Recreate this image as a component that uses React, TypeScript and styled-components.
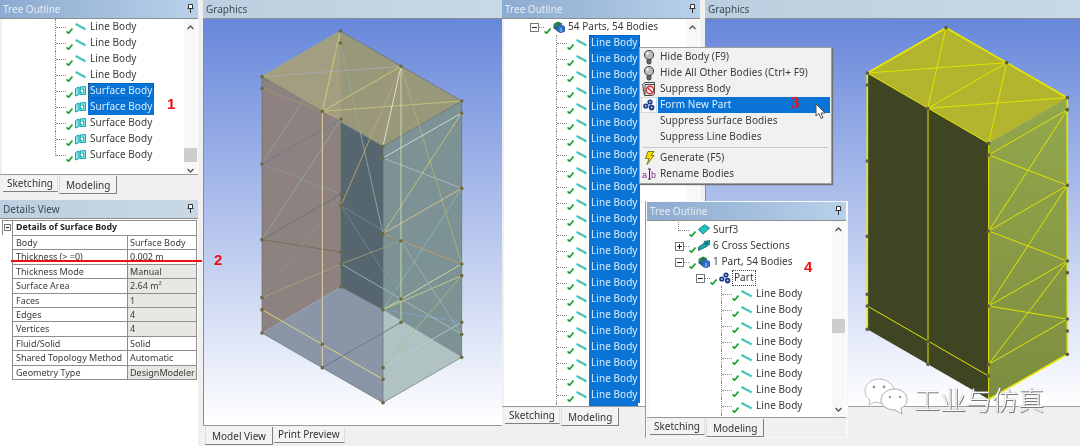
import { createGlobalStyle } from 'styled-components'
import styled from 'styled-components'

const GlobalStyle = createGlobalStyle`
  html, body {
    margin: 0;
    padding: 0;
    background: #f0f0f0;
  }
  * {
    box-sizing: border-box;
  }
`

const Page = styled.div`
  position: relative;
  width: 1080px;
  height: 446px;
  display: flex;
  overflow: hidden;
  background: #f0f0f0;
  font-family: "Noto Sans", "Liberation Sans", sans-serif;
  font-size: 10px;
  color: #3a3a3a;
  filter: blur(0.35px);
`

const Column = styled.div<{ $width: number; $gap?: number }>`
  width: ${({ $width }) => $width}px;
  margin-right: ${({ $gap }) => $gap ?? 0}px;
  flex: none;
  display: flex;
  flex-direction: column;
`

const TitleBar = styled.div<{ $dim?: boolean; $offset?: number }>`
  height: 19px;
  flex: none;
  display: flex;
  align-items: center;
  justify-content: space-between;
  margin-top: ${({ $offset }) => $offset ?? 0}px;
  padding: 0 4px 1px 3px;
  border-bottom: 1px solid #8d8d8d;
  font-size: 10px;
  color: ${({ $dim }) => ($dim ? '#e4ebf2' : '#3f4a52')};
  background: ${({ $dim }) =>
    $dim ? 'linear-gradient(90deg, #8dabd0, #b8d1ea)' : 'linear-gradient(90deg, #bccfe0, #c8d8e5)'};
`

const TreeArea = styled.div<{ $height: number }>`
  height: ${({ $height }) => $height}px;
  flex: none;
  display: flex;
  margin-left: 2px;
  background: #fff;
  overflow: hidden;
`

const TreeBody = styled.div<{ $pad?: number }>`
  flex: 1;
  min-width: 0;
  padding-top: ${({ $pad }) => $pad ?? 0}px;
  overflow: hidden;
`

const Row = styled.div<{ $indent: number }>`
  height: 16px;
  display: flex;
  align-items: flex-start;
  padding-left: ${({ $indent }) => $indent}px;
  white-space: nowrap;
`

const Connector = styled.span<{ $width: number; $spine?: boolean; $last?: boolean }>`
  position: relative;
  width: ${({ $width }) => $width}px;
  height: ${({ $last }) => ($last ? 9 : 16)}px;
  flex: none;
  border-left: ${({ $spine }) => ($spine ? '1px dotted #8a8a8a' : 'none')};
  &::after {
    content: '';
    position: absolute;
    left: 0;
    right: 0;
    top: 8px;
    border-top: 1px dotted #8a8a8a;
  }
`

const SpineStub = styled.span`
  height: 16px;
  flex: none;
  border-left: 1px dotted #8a8a8a;
`

const SelectionStub = styled.span`
  width: 49px;
  height: 16px;
  margin-left: 32px;
  flex: none;
  background: #0a74d6;
`

const Expander = styled.span`
  width: 9px;
  height: 9px;
  margin-top: 4px;
  flex: none;
  position: relative;
  border: 1px solid #777;
  background: #fff;
  &::before {
    content: '';
    position: absolute;
    left: 1px;
    right: 1px;
    top: 3px;
    border-top: 1px solid #222;
  }
`

const PlusExpander = styled(Expander)`
  &::after {
    content: '';
    position: absolute;
    top: 1px;
    bottom: 1px;
    left: 3px;
    border-left: 1px solid #222;
  }
`

const CheckSlot = styled.span`
  width: 7px;
  height: 6px;
  margin: 9px 2px 0 0;
  flex: none;
  display: block;
  svg {
    display: block;
  }
`

const IconSlot = styled.span`
  width: 11px;
  height: 12px;
  margin: 2px 2px 0 0;
  flex: none;
  display: block;
  svg {
    display: block;
  }
`

const Label = styled.span<{ $selected?: boolean; $focus?: boolean }>`
  height: 16px;
  line-height: 15px;
  padding: 0 2px;
  letter-spacing: 0.05px;
  color: ${({ $selected }) => ($selected ? '#d7ecff' : '#3a3a3a')};
  background: ${({ $selected }) => ($selected ? '#0a74d6' : 'transparent')};
  outline: ${({ $focus }) => ($focus ? '1px dotted #444' : 'none')};
  outline-offset: -1px;
`

const Scrollbar = styled.div`
  width: 13px;
  flex: none;
  margin-right: 1px;
  display: flex;
  flex-direction: column;
  background: #f8f8f8;
`

const ScrollArrow = styled.div`
  height: 16px;
  flex: none;
  display: flex;
  align-items: center;
  justify-content: center;
`

const ScrollTrack = styled.div`
  flex: 1;
`

const ScrollThumb = styled.div<{ $top: number }>`
  height: 14px;
  margin-top: ${({ $top }) => $top}px;
  background: #cdcdcd;
`

const TabStrip = styled.div<{ $pad?: number }>`
  height: 20px;
  flex: none;
  display: flex;
  align-items: flex-start;
  padding-left: ${({ $pad }) => $pad ?? 3}px;
  border-top: 1px solid #9a9a9a;
  background: #f0f0f0;
`

const Tab = styled.div<{ $active?: boolean }>`
  height: ${({ $active }) => ($active ? 18 : 16)}px;
  padding: 0 ${({ $active }) => ($active ? 6 : 4)}px;
  margin-right: 1px;
  margin-top: 1px;
  line-height: ${({ $active }) => ($active ? 19 : 15)}px;
  color: #333;
  background: #f3f3f3;
  border-bottom: 1px solid #808080;
  border-right: ${({ $active }) => ($active ? '1px solid #808080' : '1px solid #e0e0e0')};
  ${({ $active }) => ($active ? 'border-left: 1px solid #dcdcdc;' : '')}
`

const Details = styled.div`
  flex: 1;
  padding: 1px 1px 0 2px;
  background: #fff;
`

const DetailsTitle = styled.div`
  height: 15px;
  display: flex;
  border: 1px solid #8e8e8e;
  border-bottom: none;
  font-weight: 700;
  color: #222;
  font-size: 8.8px;
  line-height: 13px;
`

const Gutter = styled.div`
  width: 10px;
  flex: none;
  border-right: 1px solid #8e8e8e;
`

const TinyExpander = styled(Expander)`
  display: block;
  width: 7px;
  height: 7px;
  margin: 3px 0 0 1px;
  &::before {
    top: 2px;
  }
`

const DetailsName = styled.div`
  padding-left: 3px;
`

const DetailsGrid = styled.div`
  margin-left: 10px;
  border-right: 1px solid #8e8e8e;
  border-left: 1px solid #8e8e8e;
`

const DetailsRow = styled.div`
  display: grid;
  grid-template-columns: 114px 1fr;
  height: 14.4px;
  border-top: 1px solid #8e8e8e;
  line-height: 13px;
  font-size: 9px;
  &:last-child {
    height: 15px;
    border-bottom: 1px solid #8e8e8e;
  }
`

const NameCell = styled.div`
  padding-left: 3px;
  white-space: nowrap;
  overflow: hidden;
`

const ValueCell = styled.div<{ $readonly?: boolean }>`
  padding-left: 2px;
  border-left: 1px solid #8e8e8e;
  white-space: nowrap;
  background: ${({ $readonly }) => ($readonly ? '#e8e7e3' : '#fff')};
`

const Viewport = styled.div<{ $height: number }>`
  height: ${({ $height }) => $height}px;
  flex: none;
  border-left: 1px solid #8d8d8d;
  background: linear-gradient(#6787da, #ffffff);
  overflow: hidden;
  svg {
    display: block;
  }
`

const Filler = styled.div`
  flex: 1;
  border-top: 1px solid #a0a0a0;
`

const Menu = styled.div`
  position: absolute;
  left: 639px;
  top: 47px;
  width: 193px;
  height: 137px;
  padding: 1px;
  background: #f1f1f1;
  border: 1px solid #a0a0a0;
  box-shadow: 1px 1px 1px #707070;
`

const MenuRow = styled.div`
  height: 16px;
  display: flex;
  align-items: center;
`

const MenuIcon = styled.span<{ $boxed?: boolean }>`
  width: 16px;
  height: 16px;
  margin-right: 1px;
  flex: none;
  display: flex;
  align-items: center;
  justify-content: center;
  ${({ $boxed }) => ($boxed ? 'border: 1px solid #cfd8e2; background: #fafafa;' : '')}
`

const MenuText = styled.span<{ $active?: boolean }>`
  flex: 1;
  height: 16px;
  line-height: 15px;
  padding-left: 2px;
  letter-spacing: 0.1px;
  color: ${({ $active }) => ($active ? '#dcefff' : '#3a3a3a')};
  background: ${({ $active }) => ($active ? '#0a74d6' : 'transparent')};
  white-space: nowrap;
`

const MenuSeparator = styled.div`
  height: 1px;
  margin: 2px 2px 2px;
  background: #c8c8c8;
`

const FloatingTree = styled.div`
  position: absolute;
  left: 645px;
  top: 201px;
  width: 203px;
  height: 237px;
  padding: 1px 2px 2px 1px;
  display: flex;
  flex-direction: column;
  background: #f8f8f8;
  border-left: 1px solid #9a9a9a;
`

const Marker = styled.span<{ $x: number; $y: number; $serif?: boolean }>`
  position: absolute;
  left: ${({ $x }) => $x}px;
  top: ${({ $y }) => $y}px;
  font-family: ${({ $serif }) => ($serif ? '"Liberation Serif"' : '"Liberation Sans"')}, sans-serif;
  font-size: ${({ $serif }) => ($serif ? 17 : 15)}px;
  font-weight: 700;
  line-height: 15px;
  color: #f01010;
`

const RedLine = styled.div`
  position: absolute;
  left: 11px;
  top: 260px;
  width: 191px;
  height: 2px;
  background: #ee1010;
`

const Pointer = styled.svg`
  position: absolute;
  left: 815px;
  top: 103px;
`

const Watermark = styled.div`
  position: absolute;
  left: 864px;
  top: 378px;
  display: flex;
  align-items: center;
`

const WatermarkText = styled.span`
  margin: 3px 0 0 6px;
  font-family: "Noto Sans CJK SC", sans-serif;
  font-size: 26px;
  line-height: 34px;
  font-weight: 300;
  color: #fdfdfd;
  text-shadow: 1px 1px 0 #777, 0 0 1px #888;
`

const Check = () => (
  <svg width="7" height="6" viewBox="0 0 7 6">
    <path d="M0.5 3.4 L2.5 5.2 L6.5 0.5" fill="none" stroke="#14a02c" strokeWidth="1.7" />
  </svg>
)

const LineGlyph = () => (
  <svg width="11" height="12" viewBox="0 0 11 12">
    <path d="M0.5 3 L10.5 8.5" stroke="#50cdc4" strokeWidth="2" />
    <path d="M1 2.4 L10.5 7.6" stroke="#1c6f70" strokeOpacity="0.45" strokeWidth="0.6" />
  </svg>
)

const SurfaceGlyph = () => (
  <svg width="11" height="12" viewBox="0 0 11 12">
    <path d="M0.5 3.5 L4 2 V9.5 L0.5 11 Z M5 2 L10.5 1.5 V9.5 L5 9.5 Z" fill="#8fe5e5" stroke="#12a5ad" />
    <path d="M5.5 4 H8.5 V7.5 H5.5 Z" fill="#fff" stroke="#12a5ad" strokeWidth="0.8" />
  </svg>
)

const SolidsGlyph = () => (
  <svg width="12" height="12" viewBox="0 0 12 12">
    <path d="M0.5 3 L5 0.5 L9.5 2.5 L5 5.5 Z" fill="#1f7f3f" />
    <path d="M0.5 3 L5 5.5 V10 L0.5 7.5 Z" fill="#1f6f6f" />
    <path d="M4 6 L8 3.5 L12 6 V10 L8 12 L4 10 Z" fill="#2f6fd0" stroke="#1b3f8a" strokeWidth="0.6" />
    <path d="M8 7 V11" stroke="#a8c8f0" />
  </svg>
)

const PartsGlyph = () => (
  <svg width="12" height="12" viewBox="0 0 12 12">
    <circle cx="7" cy="3" r="2.6" fill="#1d3a8a" />
    <circle cx="2.8" cy="7" r="2.6" fill="#1d3a8a" />
    <circle cx="8.6" cy="8.6" r="2.8" fill="#1d3a8a" />
    <circle cx="7" cy="3" r="0.9" fill="#bcd0ee" />
    <circle cx="2.8" cy="7" r="0.9" fill="#bcd0ee" />
    <circle cx="8.6" cy="8.6" r="1" fill="#bcd0ee" />
  </svg>
)

const Surf3Glyph = () => (
  <svg width="12" height="12" viewBox="0 0 12 12">
    <path d="M0.5 5.5 L6.5 0.7 L11.5 4 L5 10 Z" fill="#1cc4c0" stroke="#0d6f78" strokeWidth="0.9" />
  </svg>
)

const SectionGlyph = () => (
  <svg width="12" height="12" viewBox="0 0 12 12">
    <path d="M0.5 7 L6 3.5 V1.5 L11.5 0.5 V4.5 L7 7.5 L0.5 10.5 Z" fill="#1aa8a8" stroke="#135f66" strokeWidth="0.8" />
    <path d="M7 3 L9.5 2 V4 L7 5 Z" fill="#0d5a62" />
  </svg>
)

const BulbGlyph = () => (
  <svg width="12" height="15" viewBox="0 0 12 15">
    <circle cx="6" cy="5" r="4.6" fill="#b8b8b8" stroke="#444" />
    <path d="M4 9.5 H8 V13 L7 14 H5 L4 13 Z" fill="#666" stroke="#333" strokeWidth="0.7" />
    <circle cx="4.5" cy="3.5" r="1.4" fill="#eee" />
  </svg>
)

const SuppressGlyph = () => (
  <svg width="15" height="14" viewBox="0 0 15 14">
    <path d="M0.5 2.5 L3 0.5 H12.5 V12 L10 13.5 H2.5 Z" fill="#eee" stroke="#444" />
    <path d="M3 2.5 H12.5 M3 2.5 V13" stroke="#444" />
    <circle cx="8" cy="8" r="3.7" fill="#fff" stroke="#d83030" strokeWidth="1.5" />
    <path d="M5.5 5.5 L10.5 10.5" stroke="#d83030" strokeWidth="1.4" />
  </svg>
)

const GenerateGlyph = () => (
  <svg width="11" height="14" viewBox="0 0 11 14">
    <path d="M4 0.5 H10 L7 4.5 H10 L3 13.5 L5 7.5 H1.5 Z" fill="#f6e000" stroke="#6a5a00" strokeWidth="0.8" />
  </svg>
)

const RenameGlyph = () => (
  <svg width="15" height="12" viewBox="0 0 15 12">
    <text x="0" y="9.5" fontSize="9" fontFamily="Liberation Sans" fill="#8a1f9a">a</text>
    <text x="9" y="9.5" fontSize="9" fontFamily="Liberation Sans" fill="#8a1f9a">b</text>
    <path d="M6 1 H9 M7.5 1 V11 M6 11 H9" stroke="#333" fill="none" />
  </svg>
)

const PinGlyph = () => (
  <svg width="7" height="9" viewBox="0 0 7 9">
    <path d="M1.5 0.5 H5.5 V4.5 H1.5 Z M0.5 4.5 H6.5 M3.5 4.5 V9" fill="#fff" stroke="#333" />
  </svg>
)

const ChevronGlyph = ({ down }: { down?: boolean }) => (
  <svg width="7" height="5" viewBox="0 0 7 5">
    <path d={down ? 'M0.5 1 L3.5 4 L6.5 1' : 'M0.5 4 L3.5 1 L6.5 4'} fill="none" stroke="#555" strokeWidth="1.3" />
  </svg>
)

type LeafProps = { indent: number; name: string; kind?: 'line' | 'surface'; selected?: boolean; focus?: boolean; last?: boolean }

const Leaf = ({ indent, name, kind = 'line', selected, focus, last }: LeafProps) => (
  <Row $indent={indent}>
    <Connector $width={11} $spine $last={last} />
    <CheckSlot><Check /></CheckSlot>
    <IconSlot>{kind === 'line' ? <LineGlyph /> : <SurfaceGlyph />}</IconSlot>
    <Label $selected={selected} $focus={focus}>{name}</Label>
  </Row>
)

const Branch = ({ indent, name, icon, plus, focus }: { indent: number; name: string; icon: React.ReactNode; plus?: boolean; focus?: boolean }) => (
  <Row $indent={indent}>
    {plus ? <PlusExpander /> : <Expander />}
    <Connector $width={5} />
    <CheckSlot><Check /></CheckSlot>
    <IconSlot>{icon}</IconSlot>
    <Label $focus={focus}>{name}</Label>
  </Row>
)

const Scroll = ({ top }: { top: number }) => (
  <Scrollbar>
    <ScrollArrow><ChevronGlyph /></ScrollArrow>
    <ScrollTrack><ScrollThumb $top={top} /></ScrollTrack>
    <ScrollArrow><ChevronGlyph down /></ScrollArrow>
  </Scrollbar>
)

const detailsRows: [string, string, boolean][] = [
  ['Body', 'Surface Body', false],
  ['Thickness (> =0)', '0.002 m', false],
  ['Thickness Mode', 'Manual', true],
  ['Surface Area', '2.64 m²', true],
  ['Faces', '1', true],
  ['Edges', '4', true],
  ['Vertices', '4', true],
  ['Fluid/Solid', 'Solid', false],
  ['Shared Topology Method', 'Automatic', false],
  ['Geometry Type', 'DesignModeler', true],
]

type Seg = [number, number, number, number, string]

const column = (x: number, ys: number[]) => ys.map((y) => [x, y] as [number, number])

const seeThroughLines: Seg[] = [
  [183, 227, 600, 196, '#a9abb2'],
  [418, 90, 183, 227, '#b6b97e'],
  [418, 90, 364, 331, '#d9d27a'],
  [418, 126, 183, 489, '#8fa596'],
  [418, 126, 546, 698, '#93a9a4'],
  [364, 331, 600, 196, '#d8cf78'],
  [364, 331, 782, 300, '#c8c67a'],
  [600, 196, 546, 436, '#e8eaea'],
  [600, 196, 420, 614, '#c7a473'],
  [600, 196, 782, 789, '#a9b67a'],
  [364, 331, 420, 354, '#d9cc78'],
  [183, 262, 420, 354, '#a88e70'],
  [183, 489, 420, 354, '#66789a'],
  [183, 489, 420, 579, '#8497a8'],
  [183, 716, 420, 579, '#667070'],
  [183, 716, 420, 753, '#6e6f52'],
  [183, 716, 420, 354, '#9aa898'],
  [183, 890, 420, 579, '#988f88'],
  [183, 890, 420, 789, '#a8a27e'],
  [364, 331, 364, 1100, '#f1dfa8'],
  [183, 926, 546, 1135, '#ecdf7e'],
  [546, 471, 782, 336, '#cfe8e4'],
  [546, 471, 782, 562, '#b8b8c4'],
  [546, 698, 782, 336, '#cdc97a'],
  [546, 698, 782, 562, '#e3c48e'],
  [546, 698, 782, 789, '#c89a68'],
  [546, 926, 782, 562, '#88b8b0'],
  [546, 926, 782, 789, '#cfe89a'],
  [546, 926, 782, 824, '#cbd084'],
  [546, 926, 782, 964, '#7fa4c8'],
  [546, 1100, 782, 824, '#a0c080'],
  [546, 1100, 782, 964, '#b8d0d8'],
  [600, 196, 600, 964, '#cfe4b4'],
  [420, 614, 600, 720, '#6f8a8e'],
  [420, 614, 600, 894, '#6f8a8e'],
  [420, 789, 600, 720, '#9a9f7a'],
  [420, 789, 600, 894, '#a0b8b8'],
  [600, 720, 782, 1000, '#9cb4b4'],
  [600, 894, 782, 1000, '#a8c0c0'],
  [364, 1100, 600, 964, '#5f7880'],
]

const seeThroughNodes = [
  [418, 90], [418, 126], [600, 196], [364, 331],
  ...column(183, [227, 262, 489, 716, 890, 926, 996]),
  ...column(420, [354, 579, 614, 753, 789, 858]),
  ...column(546, [436, 471, 698, 926, 1100, 1135, 1205]),
  ...column(782, [300, 336, 562, 789, 824, 964, 1000, 1069]),
  ...column(600, [720, 894, 964]),
  ...column(364, [1030, 1100]),
]

const SeeThroughModel = () => (
  <svg width="298" height="406" viewBox="9 54 894 1218">
    <polygon points="183,227 420,365 420,858 183,996" fill="#8e8280" />
    <polygon points="420,365 546,436 546,926 420,858" fill="#55666e" />
    <polygon points="183,996 420,858 546,926 546,1205" fill="#8a96a8" />
    <polygon points="546,926 782,1069 546,1205" fill="#b0c2c2" />
    <polygon points="546,436 782,300 782,1069 546,926" fill="#7c9294" />
    <polygon points="183,227 418,90 782,300 546,436" fill="#99987a" />
    <polygon points="183,227 418,90 420,365" fill="#a8a282" fillOpacity="0.6" />
    <path d="M183,227 L418,90 L782,300 V1069 L546,1205 L183,996 Z M183,227 L546,436 L782,300 M546,436 V1205 M420,365 V858 L546,926" fill="none" stroke="#5f6a5c" strokeWidth="1.8" />
    {seeThroughLines.map(([x1, y1, x2, y2, color], i) => (
      <line key={i} x1={x1} y1={y1} x2={x2} y2={y2} stroke={color} strokeWidth="2.6" />
    ))}
    {seeThroughNodes.map(([cx, cy], i) => (
      <circle key={i} cx={cx} cy={cy} r="5.5" fill="#6c6c42" />
    ))}
  </svg>
)

const meshLines: [number, number, number, number][] = [
  [82, 216, 500, 185],
  [318, 80, 263, 322],
  [263, 322, 500, 185],
  [263, 322, 682, 290],
  [500, 185, 446, 427],
  [446, 462, 682, 326],
  [446, 462, 682, 553],
  [446, 690, 682, 326],
  [446, 690, 682, 553],
  [446, 690, 682, 780],
  [446, 915, 682, 553],
  [446, 915, 682, 780],
  [446, 915, 682, 954],
  [446, 1090, 682, 780],
  [446, 1090, 682, 954],
  [82, 915, 446, 1125],
  [264, 322, 264, 1090],
  [446, 427, 446, 1195],
  [82, 216, 446, 427],
]

const meshNodes = [
  [318, 80], [500, 185], [263, 322],
  ...column(82, [216, 252, 480, 706, 880, 915, 985]),
  ...column(264, [1021, 1090]),
  ...column(446, [427, 462, 690, 915, 1090, 1125]),
  ...column(682, [290, 326, 553, 780, 815, 954, 990, 1060]),
]

const SelectedModel = () => (
  <svg width="374" height="388" viewBox="-402 54 1122 1164">
    <defs>
      <linearGradient id="rightFace" x1="0" y1="0" x2="0" y2="1">
        <stop offset="0" stopColor="#93a84c" />
        <stop offset="1" stopColor="#7d8d40" />
      </linearGradient>
    </defs>
    <polygon points="82,216 446,427 446,1195 82,985" fill="#3f4522" />
    <polygon points="446,427 682,290 682,1060 446,1195" fill="url(#rightFace)" />
    <polygon points="82,216 318,80 682,290 446,427" fill="#b4b52e" />
    <path d="M82,985 V216 L318,80 L682,290 V1060 L446,1195" fill="none" stroke="#e8ea00" strokeWidth="5" />
    {meshLines.map(([x1, y1, x2, y2], i) => (
      <line key={i} x1={x1} y1={y1} x2={x2} y2={y2} stroke="#e0e400" strokeWidth="3" />
    ))}
    {meshNodes.map(([cx, cy], i) => (
      <circle key={i} cx={cx} cy={cy} r="5.5" fill="#5d5d4a" />
    ))}
  </svg>
)

const BubblesGlyph = () => (
  <svg width="44" height="38" viewBox="0 0 44 38">
    <path d="M15 1 C7 1 1 6.5 1 13 C1 17 3 20 6 22 L5 27 L11 24 C13 24.6 15 25 17 25 C25 25 30 19 30 13 C30 6.5 23 1 15 1 Z" fill="#fff" stroke="#bbb" />
    <path d="M31 11 C23 11 17 16 17 22 C17 28 23 32 31 32 L38 36 L37 30 C41 28 43 25 43 22 C43 16 38 11 31 11 Z" fill="#fff" stroke="#aaa" />
    <circle cx="10" cy="9" r="1.4" fill="#999" />
    <circle cx="20" cy="9" r="1.4" fill="#999" />
    <circle cx="26" cy="19" r="1.2" fill="#999" />
    <circle cx="36" cy="19" r="1.2" fill="#999" />
  </svg>
)

const App = () => (
  <Page>
    <GlobalStyle />

    <Column $width={198} $gap={5}>
      <TitleBar $dim>Tree Outline<PinGlyph /></TitleBar>
      <TreeArea $height={155}>
        <TreeBody>
          <Leaf indent={53} name="Line Body" />
          <Leaf indent={53} name="Line Body" />
          <Leaf indent={53} name="Line Body" />
          <Leaf indent={53} name="Line Body" />
          <Leaf indent={53} name="Surface Body" kind="surface" selected focus />
          <Leaf indent={53} name="Surface Body" kind="surface" selected />
          <Leaf indent={53} name="Surface Body" kind="surface" />
          <Leaf indent={53} name="Surface Body" kind="surface" />
          <Leaf indent={53} name="Surface Body" kind="surface" last />
        </TreeBody>
        <Scroll top={113} />
      </TreeArea>
      <TabStrip>
        <Tab>Sketching</Tab>
        <Tab $active>Modeling</Tab>
      </TabStrip>
      <TitleBar $offset={6}>Details View<PinGlyph /></TitleBar>
      <Details>
        <DetailsTitle>
          <Gutter><TinyExpander /></Gutter>
          <DetailsName>Details of Surface Body</DetailsName>
        </DetailsTitle>
        <DetailsGrid>
          {detailsRows.map(([name, value, readonly]) => (
            <DetailsRow key={name}>
              <NameCell>{name}</NameCell>
              <ValueCell $readonly={readonly}>{value}</ValueCell>
            </DetailsRow>
          ))}
        </DetailsGrid>
      </Details>
    </Column>

    <Column $width={299}>
      <TitleBar>Graphics</TitleBar>
      <Viewport $height={406}><SeeThroughModel /></Viewport>
      <TabStrip $pad={2}>
        <Tab $active>Model View</Tab>
        <Tab>Print Preview</Tab>
      </TabStrip>
    </Column>

    <Column $width={198} $gap={5}>
      <TitleBar $dim>Tree Outline<PinGlyph /></TitleBar>
      <TreeArea $height={387}>
        <TreeBody>
          <Branch indent={26} name="54 Parts, 54 Bodies" icon={<SolidsGlyph />} />
          {Array.from({ length: 23 }, (_, i) => (
            <Leaf key={i} indent={52} name="Line Body" selected focus={i === 0} />
          ))}
          <Row $indent={52}>
            <SpineStub />
            <SelectionStub />
          </Row>
        </TreeBody>
        <Scroll top={100} />
      </TreeArea>
      <TabStrip>
        <Tab>Sketching</Tab>
        <Tab $active>Modeling</Tab>
      </TabStrip>
    </Column>

    <Column $width={375}>
      <TitleBar>Graphics</TitleBar>
      <Viewport $height={387}><SelectedModel /></Viewport>
      <Filler />
    </Column>

    <Menu>
      <MenuRow><MenuIcon><BulbGlyph /></MenuIcon><MenuText>Hide Body (F9)</MenuText></MenuRow>
      <MenuRow><MenuIcon><BulbGlyph /></MenuIcon><MenuText>Hide All Other Bodies (Ctrl+ F9)</MenuText></MenuRow>
      <MenuRow><MenuIcon><SuppressGlyph /></MenuIcon><MenuText>Suppress Body</MenuText></MenuRow>
      <MenuRow><MenuIcon $boxed><PartsGlyph /></MenuIcon><MenuText $active>Form New Part</MenuText></MenuRow>
      <MenuRow><MenuIcon /><MenuText>Suppress Surface Bodies</MenuText></MenuRow>
      <MenuRow><MenuIcon /><MenuText>Suppress Line Bodies</MenuText></MenuRow>
      <MenuSeparator />
      <MenuRow><MenuIcon><GenerateGlyph /></MenuIcon><MenuText>Generate (F5)</MenuText></MenuRow>
      <MenuRow><MenuIcon><RenameGlyph /></MenuIcon><MenuText>Rename Bodies</MenuText></MenuRow>
    </Menu>

    <Pointer width="12" height="17" viewBox="0 0 12 17">
      <path d="M1 1 L1 13 L4 10.5 L6 15.5 L8 14.5 L6 10 L10 10 Z" fill="#fff" stroke="#555" />
    </Pointer>

    <FloatingTree>
      <TitleBar $dim>Tree Outline<PinGlyph /></TitleBar>
      <TreeArea $height={196}>
        <TreeBody $pad={1}>
          <Row $indent={29}>
            <Connector $width={11} $spine $last />
            <CheckSlot><Check /></CheckSlot>
            <IconSlot><Surf3Glyph /></IconSlot>
            <Label>Surf3</Label>
          </Row>
          <Branch indent={26} name="6 Cross Sections" icon={<SectionGlyph />} plus />
          <Branch indent={26} name="1 Part, 54 Bodies" icon={<SolidsGlyph />} />
          <Branch indent={47} name="Part" icon={<PartsGlyph />} focus />
          {Array.from({ length: 8 }, (_, i) => (
            <Leaf key={i} indent={72} name="Line Body" />
          ))}
          <Row $indent={72}>
            <SpineStub />
          </Row>
        </TreeBody>
        <Scroll top={82} />
      </TreeArea>
      <TabStrip>
        <Tab>Sketching</Tab>
        <Tab $active>Modeling</Tab>
      </TabStrip>
    </FloatingTree>

    <RedLine />
    <Marker $x={167} $y={96}>1</Marker>
    <Marker $x={214} $y={252}>2</Marker>
    <Marker $x={791} $y={95} $serif>3</Marker>
    <Marker $x={804} $y={259}>4</Marker>

    <Watermark>
      <BubblesGlyph />
      <WatermarkText>工业与仿真</WatermarkText>
    </Watermark>
  </Page>
)

export default App
